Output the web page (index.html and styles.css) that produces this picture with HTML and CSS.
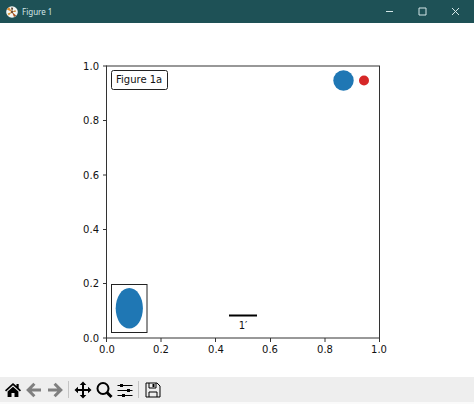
FILE: index.html
```
<!DOCTYPE html>
<html lang="en">
<head>
    <meta charset="UTF-8">
    <meta name="viewport" content="width=device-width, initial-scale=1.0">
    <title>Figure 1</title>
    <link rel="stylesheet" href="styles.css">
</head>
<body>
    <div class="window">
        <!-- Title bar -->
        <header class="titlebar">
            <svg class="logo" viewBox="0 0 12 12" aria-hidden="true">
                <circle cx="6" cy="6" r="5.8" fill="#f4f6f4"/>
                <path d="M6 6 .9 3.6A5.300 5.300 0 0 1 3.200 1.300Z" fill="#e08a2c"/>
                <path d="M6 6 5 1.600 7.200 1.800Z" fill="#5c4330"/>
                <path d="M6 6 10.200 9.400 8 11Z" fill="#a8501f"/>
                <path d="M6 6 1.600 7.400 2.800 9.600Z" fill="#d9952f"/>
                <path d="M6 6 9.400 4 9.800 5.900Z" fill="#c98a3a"/>
                <circle cx="6" cy="6" r="1.200" fill="#7a4a2a"/>
            </svg>
            <h1 class="title">Figure 1</h1>
            <div class="controls">
                <button type="button" class="control" aria-label="Minimize">
                    <svg viewBox="0 0 9 9"><path d="M1 4.5h7"/></svg>
                </button>
                <button type="button" class="control" aria-label="Maximize">
                    <svg viewBox="0 0 9 9"><path d="M1 1h7v7h-7z"/></svg>
                </button>
                <button type="button" class="control" aria-label="Close">
                    <svg viewBox="0 0 9 9"><path d="M1 1l7 7M8 1l-7 7"/></svg>
                </button>
            </div>
        </header>

        <!-- Plot -->
        <main class="canvas">
            <svg class="plot" viewBox="0 0 474 354" role="img" aria-label="Figure 1a">
                <rect class="frame" x="106.5" y="43" width="273" height="272"/>
                <path class="frame" d="M106.5 315v4M161 315v4M215.5 315v4M270.5 315v4M325 315v4M379.5 315v4"/>
                <path class="frame" d="M103 43h4M103 97.5h4M103 152h4M103 206.5h4M103 260.5h4M103 315h4"/>

                <g class="labels-x">
                    <text x="107" y="330">0.0</text>
                    <text x="161" y="330">0.2</text>
                    <text x="216" y="330">0.4</text>
                    <text x="270" y="330">0.6</text>
                    <text x="325" y="330">0.8</text>
                    <text x="379" y="330">1.0</text>
                </g>
                <g class="labels-y">
                    <text x="99" y="47">1.0</text>
                    <text x="99" y="101">0.8</text>
                    <text x="99" y="156">0.6</text>
                    <text x="99" y="210">0.4</text>
                    <text x="99" y="264">0.2</text>
                    <text x="99" y="319">0.0</text>
                </g>

                <rect class="box" x="111.5" y="47.5" width="56" height="19" rx="2"/>
                <text x="116" y="60">Figure 1a</text>

                <circle class="blue" cx="343.5" cy="57.5" r="10.2"/>
                <circle class="red" cx="364" cy="57.5" r="5"/>

                <rect class="box" x="111.5" y="261.5" width="35.5" height="48"/>
                <ellipse class="blue" cx="129.3" cy="285.3" rx="13.6" ry="20.3"/>

                <path class="scale" d="M229 292.5h28"/>
                <text class="scale-label" x="243" y="306">1′</text>
            </svg>
        </main>

        <!-- Navigation toolbar -->
        <nav class="toolbar">
            <button type="button" class="tool" aria-label="Home">
                <svg viewBox="0 0 18 18"><path d="M9 2 1 9.2l1.1 1.2L9 4.3l6.9 6.1L17 9.2l-2.3-2.1V3h-2.2v2.1zM9 5.7 3.6 10.4V16H7.5v-4h3v4h3.9v-5.6z"/></svg>
            </button>
            <button type="button" class="tool" aria-label="Back" disabled>
                <svg viewBox="0 0 18 18"><path class="arrow" d="M16 9H4M9.4 2.8 3.2 9l6.2 6.2"/></svg>
            </button>
            <button type="button" class="tool" aria-label="Forward" disabled>
                <svg viewBox="0 0 18 18"><path class="arrow" d="M2 9h12M8.6 2.8 14.8 9l-6.2 6.2"/></svg>
            </button>
            <span class="separator"></span>
            <button type="button" class="tool" aria-label="Pan">
                <svg viewBox="0 0 18 18"><path d="M9 .5 12.3 4H10v4h4V5.7L17.5 9 14 12.3V10h-4v4h2.3L9 17.5 5.7 14H8v-4H4v2.3L.5 9 4 5.7V8h4V4H5.7z"/></svg>
            </button>
            <button type="button" class="tool" aria-label="Zoom">
                <svg viewBox="0 0 18 18"><circle class="lens" cx="8" cy="7.5" r="5.5"/><path class="handle" d="M12 11.5 16.5 16"/></svg>
            </button>
            <button type="button" class="tool" aria-label="Configure subplots">
                <svg viewBox="0 0 18 18"><path class="rail" d="M1.5 4.5h15M1.5 9.5h15M1.5 14.5h15"/><path d="M4 3h3v3H4zM11 8h3v3h-3zM6 13h3v3H6z"/></svg>
            </button>
            <span class="separator"></span>
            <button type="button" class="tool" aria-label="Save">
                <svg viewBox="0 0 18 18"><path class="disk" d="M2 2h11l3 3v11H2zM5 16v-5h8v5M5 2v5h7V2"/><path d="M8.5 3h2v3h-2z"/></svg>
            </button>
        </nav>
    </div>
</body>
</html>
```
FILE: styles.css
```
body {
    margin: 0;
    font-family: "Open Sans", sans-serif;
    background-color: #fff;
}
.window {
    display: flex;
    flex-direction: column;
    height: 100vh;
}
.titlebar {
    display: flex;
    align-items: center;
    height: 23px;
    padding: 0 2px 0 6px;
    box-sizing: border-box;
    background-color: #1e5156;
    color: #d3e6e7;
}
.logo {
    width: 12px;
    height: 12px;
}
.title {
    flex: 1;
    margin: 0 0 0 4px;
    font-family: "Noto Sans", sans-serif;
    font-size: 8px;
    font-weight: 400;
    line-height: 12px;
}
.controls {
    display: flex;
    height: 100%;
}
.control {
    display: flex;
    align-items: center;
    justify-content: center;
    width: 33px;
    padding: 0;
    border: none;
    background: none;
}
.control svg {
    width: 9px;
    height: 9px;
    fill: none;
    stroke: #d3e6e7;
}
.control:hover {
    background-color: #2f656a;
}
.canvas {
    flex: 1;
    min-height: 0;
}
.plot {
    display: block;
    width: 100%;
    height: 100%;
    font-family: "DejaVu Sans", sans-serif;
    font-size: 10px;
    fill: #111;
}
.frame {
    fill: none;
    stroke: #333;
}
.box {
    fill: #fff;
    stroke: #222;
}
.blue {
    fill: #1f77b4;
}
.red {
    fill: #d62728;
}
.scale {
    stroke: #000;
    stroke-width: 2;
}
.labels-x,
.scale-label {
    text-anchor: middle;
}
.labels-y {
    text-anchor: end;
}
.toolbar {
    display: flex;
    align-items: center;
    height: 25px;
    padding: 0 2px;
    border-bottom: 2px solid #fafafa;
    background-color: #eee;
}
.tool {
    display: flex;
    align-items: center;
    justify-content: center;
    width: 21px;
    height: 21px;
    padding: 0;
    border: none;
    background: none;
    color: #000;
}
.tool:disabled {
    color: #7f7f7f;
}
.tool svg {
    width: 18px;
    height: 18px;
    fill: currentColor;
}
.tool .arrow,
.tool .lens,
.tool .handle,
.tool .rail,
.tool .disk {
    fill: none;
    stroke: currentColor;
}
.tool .arrow,
.tool .handle {
    stroke-width: 3;
}
.tool .lens {
    stroke-width: 2;
}
.separator {
    width: 1px;
    height: 17px;
    margin: 0 3px;
    background-color: #c4c4c4;
}
```
